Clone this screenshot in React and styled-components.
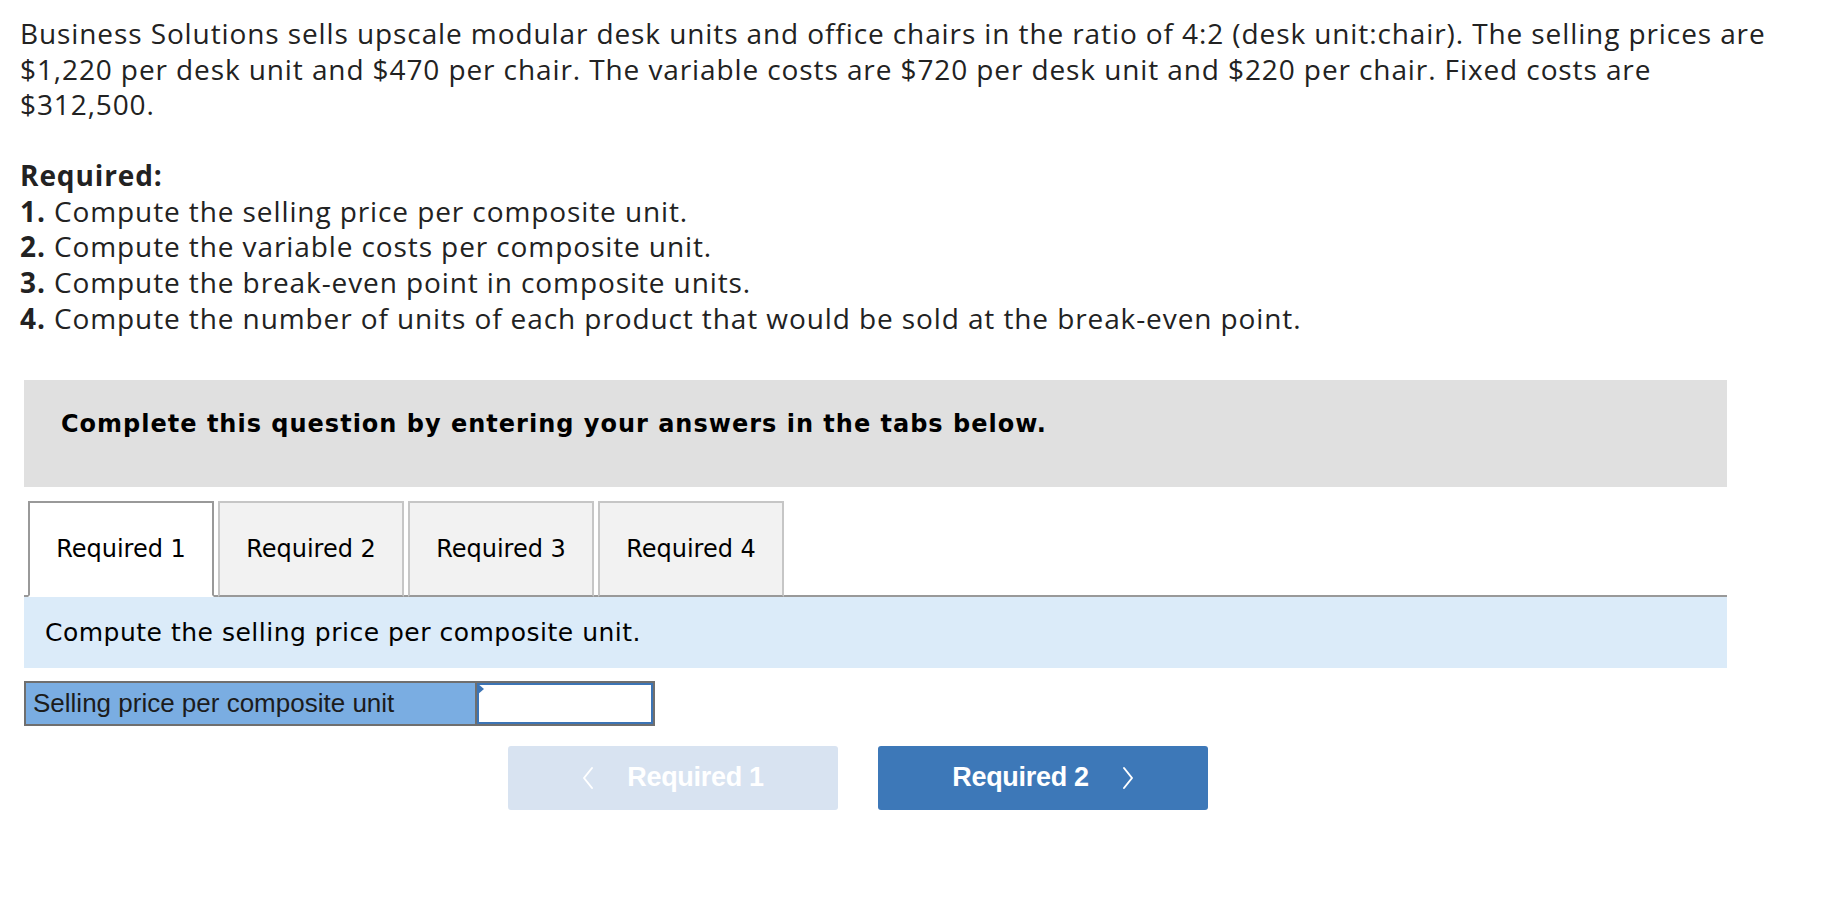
import React from "react";
import styled, { createGlobalStyle } from "styled-components";

const GlobalStyle = createGlobalStyle`
  html, body {
    margin: 0;
    padding: 0;
    background: #ffffff;
  }
`;

const Page = styled.div`
  padding: 16px 20px 40px 20px;
  color: #222222;
  font-family: "Open Sans", "Lato", sans-serif;
`;

const Intro = styled.p`
  margin: 0;
  font-size: 28px;
  line-height: 35.5px;
  letter-spacing: 0.9px;
`;

const RequiredBlock = styled.div`
  margin-top: 35.5px;
  font-size: 28px;
  line-height: 35.7px;
  letter-spacing: 0.9px;
`;

const Strong = styled.span`
  font-weight: 700;
`;

const Question = styled.div`
  margin: 43px 0 0 4px;
  width: 1703px;
  font-family: "DejaVu Sans", Verdana, sans-serif;
  color: #000000;
`;

const Banner = styled.div`
  box-sizing: border-box;
  height: 107px;
  padding: 30px 37px;
  background: #e0e0e0;
  font-size: 24px;
  font-weight: 700;
  letter-spacing: 1px;
  line-height: 28px;
`;

const TabBar = styled.div`
  display: flex;
  gap: 4px;
  margin-top: 14px;
  padding-left: 4px;
  border-bottom: 2px solid #999999;
`;

const Tab = styled.div`
  box-sizing: border-box;
  width: 186px;
  height: 96px;
  margin-bottom: -2px;
  display: flex;
  align-items: center;
  justify-content: center;
  font-size: 24px;
  background: ${(p) => (p.$active ? "#ffffff" : "#f2f2f2")};
  border: 2px solid ${(p) => (p.$active ? "#999999" : "#c6c6c6")};
  border-bottom: ${(p) => (p.$active ? "2px solid #ffffff" : "2px solid #999999")};
`;

const Prompt = styled.div`
  box-sizing: border-box;
  height: 71px;
  padding-left: 21px;
  display: flex;
  align-items: center;
  background: #dbebf9;
  font-size: 25px;
  letter-spacing: 0.5px;
`;

const AnswerRow = styled.div`
  display: flex;
  width: 631px;
  height: 45px;
  box-sizing: border-box;
  margin-top: 13px;
  border: 2px solid #6f6f6f;
`;

const LabelCell = styled.div`
  box-sizing: border-box;
  flex: 0 0 451px;
  padding-left: 7px;
  display: flex;
  align-items: center;
  white-space: nowrap;
  background: #7aade2;
  border-right: 2px solid #6f6f6f;
  font-family: "Liberation Sans", Arial, sans-serif;
  font-size: 26px;
  color: #1c1c1c;
`;

const InputCell = styled.div`
  position: relative;
  flex: 1 1 0;
  min-width: 0;
  display: flex;
`;

const Input = styled.input`
  flex: 1;
  width: 100%;
  min-width: 0;
  box-sizing: border-box;
  margin: 0;
  border: 2px solid #3c74b5;
  outline: none;
  background: #ffffff;
  font-size: 22px;
`;

const Marker = styled.span`
  position: absolute;
  left: 0;
  top: 0;
  width: 0;
  height: 0;
  border-top: 6px solid transparent;
  border-bottom: 6px solid transparent;
  border-left: 7px solid #3c74b5;
`;

const NavRow = styled.div`
  display: flex;
  gap: 40px;
  margin-top: 20px;
  padding-left: 484px;
`;

const NavButton = styled.button`
  box-sizing: border-box;
  width: 330px;
  height: 64px;
  padding: 0;
  display: flex;
  align-items: center;
  justify-content: center;
  gap: 33px;
  border: none;
  border-radius: 3px;
  background: ${(p) => (p.$disabled ? "#d8e3f1" : "#3d78b8")};
  color: #ffffff;
  font-family: "Liberation Sans", Arial, sans-serif;
  font-size: 27px;
  font-weight: 700;
  letter-spacing: -0.3px;
  cursor: ${(p) => (p.$disabled ? "default" : "pointer")};
`;

const Chevron = ({ dir }) => (
  <svg width="12" height="24" viewBox="0 0 12 24" fill="none">
    <polyline
      points={dir === "left" ? "10,2 2,12 10,22" : "2,2 10,12 2,22"}
      stroke="#ffffff"
      strokeWidth="2"
      strokeLinecap="round"
      strokeLinejoin="round"
    />
  </svg>
);

const tabs = ["Required 1", "Required 2", "Required 3", "Required 4"];

const App = () => {
  return (
    <>
      <GlobalStyle />
      <Page>
        <Intro>
          Business Solutions sells upscale modular desk units and office chairs in
          the ratio of 4:2 (desk unit:chair). The selling prices are
          <br />
          $1,220 per desk unit and $470 per chair. The variable costs are $720 per
          desk unit and $220 per chair. Fixed costs are
          <br />
          $312,500.
        </Intro>
        <RequiredBlock>
          <Strong>Required:</Strong>
          <div>
            <Strong>1.</Strong> Compute the selling price per composite unit.
          </div>
          <div>
            <Strong>2.</Strong> Compute the variable costs per composite unit.
          </div>
          <div>
            <Strong>3.</Strong> Compute the break-even point in composite units.
          </div>
          <div>
            <Strong>4.</Strong> Compute the number of units of each product that
            would be sold at the break-even point.
          </div>
        </RequiredBlock>

        <Question>
          <Banner>Complete this question by entering your answers in the tabs below.</Banner>
          <TabBar>
            {tabs.map((t, i) => (
              <Tab key={t} $active={i === 0}>
                {t}
              </Tab>
            ))}
          </TabBar>
          <Prompt>Compute the selling price per composite unit.</Prompt>
          <AnswerRow>
            <LabelCell>Selling price per composite unit</LabelCell>
            <InputCell>
              <Input type="text" />
              <Marker />
            </InputCell>
          </AnswerRow>
          <NavRow>
            <NavButton $disabled>
              <Chevron dir="left" />
              Required 1
            </NavButton>
            <NavButton>
              Required 2
              <Chevron dir="right" />
            </NavButton>
          </NavRow>
        </Question>
      </Page>
    </>
  );
};

export default App;
